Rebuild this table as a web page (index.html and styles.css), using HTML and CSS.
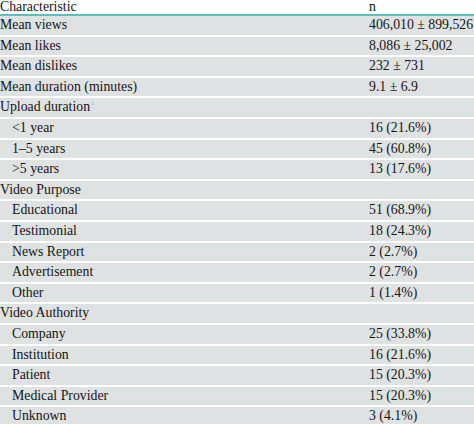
FILE: index.html
```html
<!DOCTYPE html>
<html>
<head>
<meta charset="utf-8">
<link rel="stylesheet" href="styles.css">
</head>
<body>
<table class="t">
  <colgroup><col class="c1"><col class="c2"></colgroup>
  <thead>
    <tr><th>Characteristic</th><th>n</th></tr>
  </thead>
  <tbody>
    <tr><td>Mean views</td><td>406,010 ± 899,526</td></tr>
    <tr><td>Mean likes</td><td>8,086 ± 25,002</td></tr>
    <tr><td>Mean dislikes</td><td>232 ± 731</td></tr>
    <tr><td>Mean duration (minutes)</td><td>9.1 ± 6.9</td></tr>
    <tr><td>Upload duration<sup class="fn">a</sup></td><td></td></tr>
    <tr><td class="ind">&lt;1 year</td><td>16 (21.6%)</td></tr>
    <tr><td class="ind">1–5 years</td><td>45 (60.8%)</td></tr>
    <tr><td class="ind">&gt;5 years</td><td>13 (17.6%)</td></tr>
    <tr><td>Video Purpose</td><td></td></tr>
    <tr><td class="ind">Educational</td><td>51 (68.9%)</td></tr>
    <tr><td class="ind">Testimonial</td><td>18 (24.3%)</td></tr>
    <tr><td class="ind">News Report</td><td>2 (2.7%)</td></tr>
    <tr><td class="ind">Advertisement</td><td>2 (2.7%)</td></tr>
    <tr><td class="ind">Other</td><td>1 (1.4%)</td></tr>
    <tr><td>Video Authority</td><td></td></tr>
    <tr><td class="ind">Company</td><td>25 (33.8%)</td></tr>
    <tr><td class="ind">Institution</td><td>16 (21.6%)</td></tr>
    <tr><td class="ind">Patient</td><td>15 (20.3%)</td></tr>
    <tr><td class="ind">Medical Provider</td><td>15 (20.3%)</td></tr>
    <tr><td class="ind">Unknown</td><td>3 (4.1%)</td></tr>
  </tbody>
</table>
</body>
</html>
```
FILE: styles.css
```css
html, body {
  margin: 0;
  padding: 0;
  background: #ffffff;
  overflow: hidden;
}
.t {
  width: 474px;
  table-layout: fixed;
  border-collapse: collapse;
  font-family: "Liberation Serif", "Times New Roman", serif;
  font-size: 13.8px;
  color: #151515;
}
.c1 { width: 369px; }
.c2 { width: 105px; }
.t th {
  font-weight: normal;
  text-align: left;
  height: 14px;
  padding: 0;
  line-height: 14px;
  vertical-align: middle;
  border-bottom: 2px solid #5cbfbf;
  white-space: nowrap;
}
.t td {
  height: 18.6px;
  padding: 0;
  line-height: 18.6px;
  background: #dfe2e3;
  border-bottom: 2px solid #ffffff;
  white-space: nowrap;
  overflow: visible;
}
.t td.ind { padding-left: 12px; }
.fn {
  color: #7fcccc;
  font-size: 7px;
  vertical-align: top;
  line-height: 10px;
  margin-left: 1px;
}
```
